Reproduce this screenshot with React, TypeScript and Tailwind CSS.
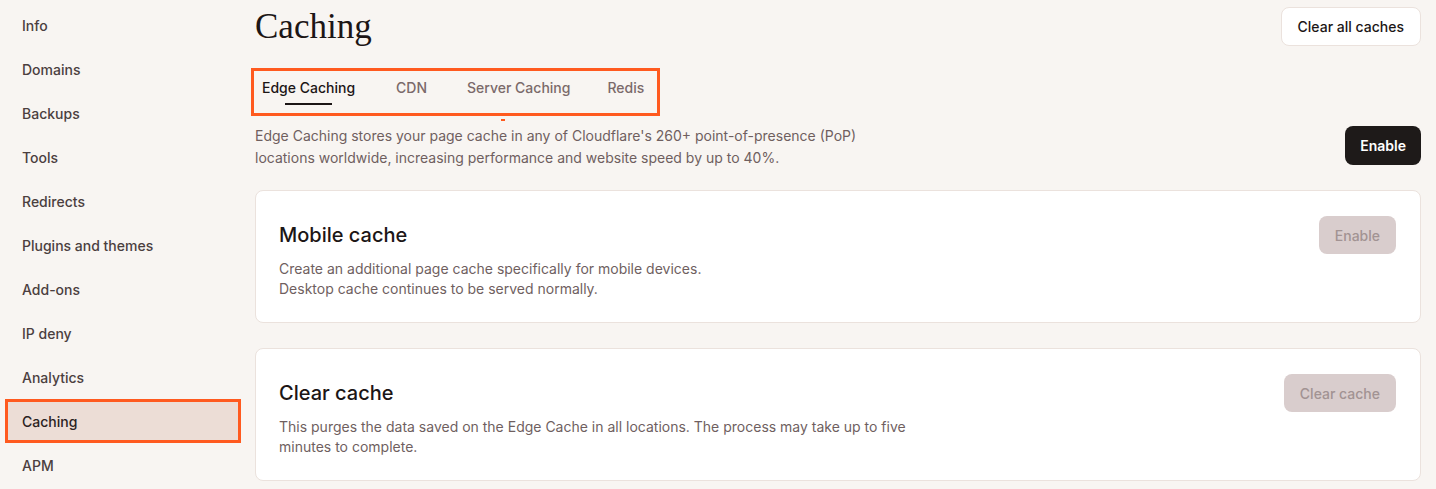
const navItems = [
  'Info',
  'Domains',
  'Backups',
  'Tools',
  'Redirects',
  'Plugins and themes',
  'Add-ons',
  'IP deny',
  'Analytics',
  'Caching',
  'APM',
]

const tabs = [
  { label: 'Edge Caching', gap: 'ml-0' },
  { label: 'CDN', gap: 'ml-[41px]' },
  { label: 'Server Caching', gap: 'ml-[40px]' },
  { label: 'Redis', gap: 'ml-[37px]' },
]

function Card({ title, lines, action }: { title: string; lines: string[]; action: string }) {
  return (
    <div className="h-[133px] bg-white border border-[#ebe2dd] rounded-[8px] flex justify-between pl-[23px] pr-[24px]">
      <div className="pt-[30px]">
        <h2 className="text-[20px] leading-[28px] font-medium text-[#1c1616]">{title}</h2>
        <div className="mt-[10px] text-[14px] leading-[20px] text-[#6f5f5f]">
          {lines.map(l => (
            <p key={l}>{l}</p>
          ))}
        </div>
      </div>
      <div className="pt-[25px]">
        <button
          disabled
          className="h-[38px] px-[16px] rounded-[8px] bg-[#d9cdcd] text-[14px] font-medium text-[#a29393]"
        >
          {action}
        </button>
      </div>
    </div>
  )
}

export default function App() {
  return (
    <div
      className="flex h-[489px] w-full overflow-hidden bg-[#f8f5f2]"
      style={{ fontFamily: 'Inter, "Noto Sans", sans-serif' }}
    >
      <aside className="w-[255px] shrink-0 pt-[3px]">
        {navItems.map(item =>
          item === 'Caching' ? (
            <div
              key={item}
              className="h-[44px] mx-[5px] w-[236px] flex items-center pl-[14px] border-[3px] border-[#ff5a1f] bg-[#ecddd6] text-[14px] font-medium text-[#2a2222]"
            >
              {item}
            </div>
          ) : (
            <div key={item} className="h-[44px] flex items-center pl-[22px] text-[14px] font-medium text-[#4b3f3f]">
              {item}
            </div>
          )
        )}
      </aside>

      <main className="flex-1 pr-[15px] flex flex-col">
        <div className="h-[52px] flex items-center justify-between">
          <h1
            className="text-[35px] leading-[40px] text-[#1c1616] pt-[1px]"
            style={{ fontFamily: '"Liberation Serif", "DejaVu Serif", serif' }}
          >
            Caching
          </h1>
          <button className="h-[39px] px-[16px] rounded-[8px] bg-white border border-[#ebe2dd] text-[14px] font-medium text-[#1c1616]">
            Clear all caches
          </button>
        </div>

        <div className="relative mt-[16px]">
          <div className="-ml-[4px] w-[409px] h-[48px] border-[3px] border-[#ff5a1f] flex items-start pl-[8px]">
            {tabs.map((t, i) => (
              <div key={t.label} className={`flex flex-col items-center pt-[7px] ${t.gap}`}>
                <span
                  className={`text-[14px] leading-[20px] font-medium ${
                    i === 0 ? 'text-[#1c1616]' : 'text-[#7b6a6a]'
                  }`}
                >
                  {t.label}
                </span>
                {i === 0 && <span className="mt-[5px] h-[2px] w-[47px] bg-[#1c1616]" />}
              </div>
            ))}
          </div>
          <span className="absolute left-[246px] top-[51px] w-[4px] h-[2px] bg-[#ff5a1f]" />
        </div>

        <div className="mt-[8px] flex justify-between items-start">
          <div className="text-[14px] leading-[22px] text-[#6f5f5f] pt-[1px]">
            <p>Edge Caching stores your page cache in any of Cloudflare's 260+ point-of-presence (PoP)</p>
            <p>locations worldwide, increasing performance and website speed by up to 40%.</p>
          </div>
          <button className="mt-[2px] h-[39px] px-[15px] rounded-[8px] bg-[#1e1a19] text-[14px] font-semibold text-white">
            Enable
          </button>
        </div>

        <div className="mt-[21px] flex flex-col gap-[25px]">
          <Card
            title="Mobile cache"
            lines={[
              'Create an additional page cache specifically for mobile devices.',
              'Desktop cache continues to be served normally.',
            ]}
            action="Enable"
          />
          <Card
            title="Clear cache"
            lines={[
              'This purges the data saved on the Edge Cache in all locations. The process may take up to five',
              'minutes to complete.',
            ]}
            action="Clear cache"
          />
        </div>
      </main>
    </div>
  )
}
